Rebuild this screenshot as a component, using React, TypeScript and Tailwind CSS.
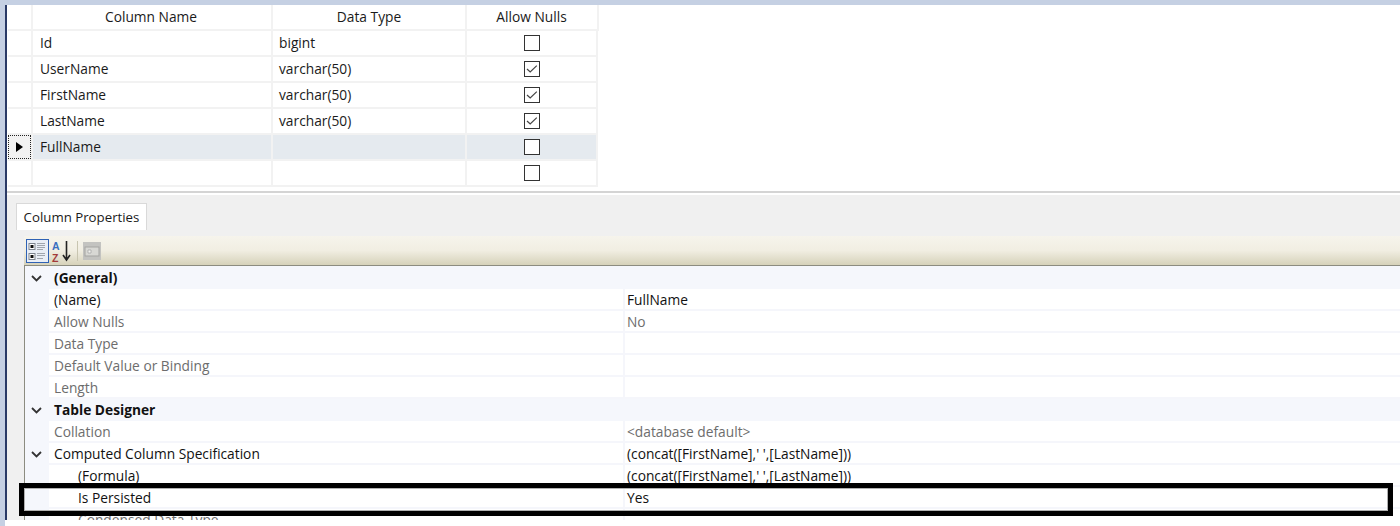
import React from "react";

const font = { fontFamily: '"Open Sans", "Noto Sans", sans-serif' };

function Check({ on }: { on?: boolean }) {
  return (
    <svg width="16" height="16" viewBox="0 0 16 16" className="block">
      <rect x="0.5" y="0.5" width="15" height="15" fill="#fff" stroke="#333" />
      {on && <path d="M3 8 L6.2 11 L12.8 4.6" fill="none" stroke="#444" strokeWidth="1.2" />}
    </svg>
  );
}

function GridRow({ name, type, on, sel }: { name: string; type: string; on?: boolean; sel?: boolean }) {
  const cell = sel ? "bg-[#e5eaef]" : "bg-white";
  return (
    <div className="flex h-[26px] w-[590px]">
      <div className="w-[25px] h-full shrink-0 border-r-2 border-b-2 border-[#f2f2f2] relative flex items-center justify-center">
        {sel && (
          <div className="absolute inset-0 border border-dotted border-[#222] flex items-center justify-center bg-[#f2f2f2]">
            <svg width="7" height="10" viewBox="0 0 7 10"><path d="M0 0 L7 5 L0 10 Z" fill="#000" /></svg>
          </div>
        )}
      </div>
      <div className={`w-[240px] shrink-0 border-r-2 border-b-2 border-[#f2f2f2] pl-[7px] flex items-center text-[13.75px] text-[#1a1a1a] ${cell}`}>{name}</div>
      <div className={`w-[194px] shrink-0 border-r-2 border-b-2 border-[#f2f2f2] pl-[6px] flex items-center text-[13.75px] text-[#1a1a1a] ${cell}`}>{type}</div>
      <div className={`w-[131px] shrink-0 border-r-2 border-b-2 border-[#f2f2f2] flex items-center justify-center ${cell}`}>
        <Check on={on} />
      </div>
    </div>
  );
}

function Chevron() {
  return (
    <svg width="11" height="7" viewBox="0 0 11 7" className="mr-[2px]">
      <path d="M1 1 L5.5 5.5 L10 1" fill="none" stroke="#333" strokeWidth="1.8" />
    </svg>
  );
}

function Cat({ label, first }: { label: string; first?: boolean }) {
  return (
    <div className={`${first ? "h-[23px] pt-[1px]" : "h-[22px]"} flex items-center bg-[#f5f7fc] text-[13.75px] font-bold text-[#111]`}>
      <div className="w-[24px] shrink-0 flex items-center justify-center"><Chevron /></div>
      <span className="pl-[5px]">{label}</span>
    </div>
  );
}

function Prop({ name, value, dim, indent, expand }: { name: string; value?: string; dim?: boolean; indent?: boolean; expand?: boolean }) {
  const color = dim ? "text-[#6d6d6d]" : "text-[#111]";
  return (
    <div className="h-[22px] flex bg-[#f5f7fc] text-[13.75px]">
      <div className="w-[24px] shrink-0 flex items-center justify-center">{expand && <Chevron />}</div>
      <div className={`w-[574px] shrink-0 flex items-center border-b-2 pt-[2px] border-[#f5f6fb] bg-white ${indent ? "pl-[29px]" : "pl-[5px]"} ${color}`}>
        {name}
      </div>
      <div className={`flex-1 flex items-center pl-[2px] pt-[2px] border-l-2 border-b-2 border-[#f5f6fb] bg-white ${color}`}>{value}</div>
    </div>
  );
}

export default function App() {
  return (
    <div className="flex w-[1400px] h-[526px] overflow-hidden bg-white" style={font}>
      <div className="w-[5px] shrink-0 bg-[#c5d0e3]" />
      <div className="flex-1 min-w-0 flex flex-col">
        <div className="h-[5px] shrink-0 bg-[#c5d0e3]" />
        <div className="flex h-[515px] shrink-0 relative">
          <div className="w-[2px] shrink-0 bg-[#2a3a66]" />
          <div className="flex-1 min-w-0 flex flex-col">
            <div className="h-[181px] pl-px shrink-0">
              <div className="flex h-[26px] w-[590px] text-[13.75px] text-[#1a1a1a]">
                <div className="w-[25px] shrink-0 border-r-2 border-b-2 border-[#f2f2f2]" />
                <div className="w-[240px] shrink-0 border-r-2 border-b-2 border-[#f2f2f2] flex items-center justify-center pr-[2px] pt-[1px]">Column Name</div>
                <div className="w-[194px] shrink-0 border-r-2 border-b-2 border-[#f2f2f2] flex items-center justify-center pt-[1px]">Data Type</div>
                <div className="w-[132px] shrink-0 border-r-2 border-b-2 border-[#f2f2f2] flex items-center justify-center pt-[1px] pr-[1px]">Allow Nulls</div>
              </div>
              <GridRow name="Id" type="bigint" />
              <GridRow name="UserName" type="varchar(50)" on />
              <GridRow name="FirstName" type="varchar(50)" on />
              <GridRow name="LastName" type="varchar(50)" on />
              <GridRow name="FullName" type="" sel />
              <GridRow name="" type="" />
            </div>
            <div className="h-[5px] border-t-2 border-b border-t-[#d4d4d4] border-b-[#a8a8a8] bg-white shrink-0 mt-[5px] -mb-px" />
            <div className="flex-1 min-h-0 bg-[#f0f0f0] pl-[9px] pt-[8px] flex flex-col overflow-hidden">
              <div className="w-[131px] h-[27px] shrink-0 bg-white border-t border-r border-l border-[#d9d9d9] pt-[2px] flex items-center justify-center text-[13.25px] text-[#1a1a1a]">
                Column Properties
              </div>
              <div className="ml-[8px] mt-[6px] h-[29px] shrink-0 bg-gradient-to-b from-[#f6f4ec] via-[#f1eee2] to-[#d6d2ba] flex items-center gap-[2px] pl-[2px]">
                <div className="w-[23px] h-[24px] border border-[#2f62b5] bg-[#e9eef6] flex items-center justify-center">
                  <svg width="19" height="20" viewBox="0 0 19 20">
                    <rect x="1" y="2.5" width="6" height="6" fill="#fff" stroke="#7e858f" />
                    <rect x="2.5" y="4" width="3" height="3" fill="#111" />
                    <rect x="1" y="12.5" width="6" height="6" fill="#fff" stroke="#7e858f" />
                    <rect x="2.5" y="14" width="3" height="3" fill="#111" />
                    <path d="M9 2.5h8M9 4.5h8M9 6.5h8M9 8.5h6M9 12.5h8M9 14.5h8M9 17.5h6" stroke="#a0a6ae" strokeWidth="1" />
                  </svg>
                </div>
                <svg width="22" height="24" viewBox="0 0 22 24">
                  <text x="1" y="10.5" fontSize="10.5" fontWeight="700" fill="#3a6fc0" style={{ fontFamily: '"Liberation Sans", sans-serif' }}>A</text>
                  <text x="1" y="22.5" fontSize="10.5" fontWeight="700" fill="#a33a3a" style={{ fontFamily: '"Liberation Sans", sans-serif' }}>Z</text>
                  <path d="M15.5 2 V20 M12 16 L15.5 21 L19 16" fill="none" stroke="#222" strokeWidth="1.6" />
                </svg>
                <div className="w-px h-[20px] bg-[#c8c5b0] mx-[2px]" />
                <svg width="20" height="20" viewBox="0 0 20 20">
                  <rect x="1" y="1" width="18" height="18" fill="#c3c3c0" />
                  <rect x="3" y="6" width="14" height="9" fill="#d8d8d4" stroke="#a5a5a2" />
                  <path d="M6 9h3v3H6z" fill="#f3f3f0" stroke="#999" strokeWidth="0.6" />
                </svg>
              </div>
              <div className="ml-[8px] flex-1 min-h-0 border-t border-l border-[#8c8c80] bg-[#f5f7fc] overflow-hidden">
                <Cat label="(General)" first />
                <Prop name="(Name)" value="FullName" />
                <Prop name="Allow Nulls" value="No" dim />
                <Prop name="Data Type" dim />
                <Prop name="Default Value or Binding" dim />
                <Prop name="Length" dim />
                <Cat label="Table Designer" />
                <Prop name="Collation" value="<database default>" dim />
                <Prop name="Computed Column Specification" value="(concat([FirstName],' ',[LastName]))" expand />
                <Prop name="(Formula)" value="(concat([FirstName],' ',[LastName]))" indent />
                <Prop name="Is Persisted" value="Yes" indent />
                <Prop name="Condensed Data Type" dim indent />
              </div>
            </div>
          </div>
          <div className="absolute left-[14px] top-[478px] w-[1374px] h-[33px] border-[5px] border-black shadow-[inset_0_0_0_1px_#b0b0b0]" />
        </div>
      </div>
    </div>
  );
}
